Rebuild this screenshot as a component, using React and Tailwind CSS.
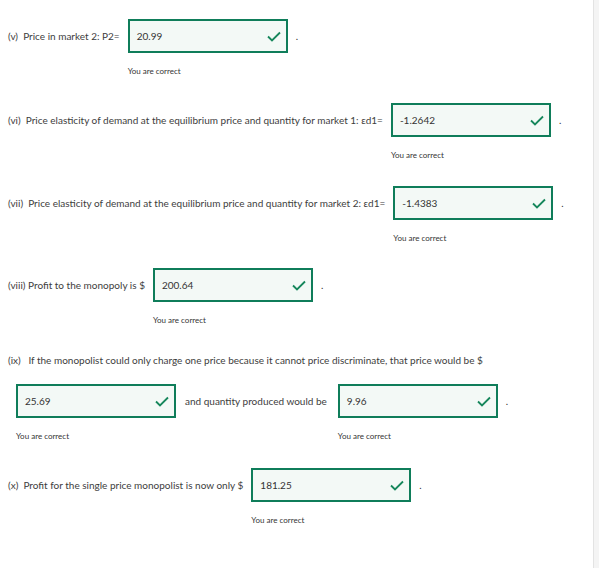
import React from 'react';

const font = { fontFamily: 'Lato, "Liberation Sans", sans-serif' };

// green tick shown inside a correct answer box
const Tick = () => (
  <svg width="14" height="11" viewBox="0 0 14 11" className="shrink-0">
    <polyline points="1,5.5 5,9.5 13,1.5" fill="none" stroke="#16875c" strokeWidth="1.8" />
  </svg>
);

const AnswerBox = ({ value }) => (
  <div className="flex flex-col items-start">
    <div className="w-[160px] h-[34px] border-2 border-[#0f7d5a] bg-[#f3f9f6] flex items-center justify-between pl-[7px] pr-[5px]">
      <span className="text-[10px] text-[#333]">{value}</span>
      <Tick />
    </div>
    <span className="mt-[13px] text-[8px] leading-[10px] text-[#333]">You are correct</span>
  </div>
);

const Dot = () => <span className="h-[34px] flex items-center ml-[8px] text-[10px] text-[#333]">.</span>;

const Question = ({ label, value, className = '' }) => (
  <div className={`flex items-start ${className}`}>
    <span className="h-[34px] flex items-center mr-[8px] text-[10px] text-[#3d3d3d] whitespace-pre">{label}</span>
    <AnswerBox value={value} />
    <Dot />
  </div>
);

export default function App() {
  return (
    <div className="flex min-h-[568px] bg-white" style={font}>
      <div className="w-[594px] border-r border-[#e3e3e3] pl-[8px] pt-[19px]">
        <Question label="(v)  Price in market 2: P2=" value="20.99" />
        <Question
          className="mt-[27px]"
          label="(vi)  Price elasticity of demand at the equilibrium price and quantity for market 1: εd1="
          value="-1.2642"
        />
        <Question
          className="mt-[26px]"
          label="(vii)  Price elasticity of demand at the equilibrium price and quantity for market 2: εd1="
          value="-1.4383"
        />
        <Question className="mt-[25px]" label="(viii) Profit to the monopoly is $" value="200.64" />

        <p className="mt-[28px] text-[10px] leading-[14px] text-[#3d3d3d] whitespace-pre">
          (ix)   If the monopolist could only charge one price because it cannot price discriminate, that price would be $
        </p>
        <div className="mt-[17px] ml-[8px] flex items-start">
          <AnswerBox value="25.69" />
          <span className="h-[34px] flex items-center ml-[9px] mr-[11px] text-[10px] text-[#3d3d3d]">
            and quantity produced would be
          </span>
          <AnswerBox value="9.96" />
          <Dot />
        </div>

        <Question
          className="mt-[27px]"
          label="(x)  Profit for the single price monopolist is now only $"
          value="181.25"
        />
      </div>
      <div className="flex-1 bg-[#f4f4f4]" />
    </div>
  );
}
